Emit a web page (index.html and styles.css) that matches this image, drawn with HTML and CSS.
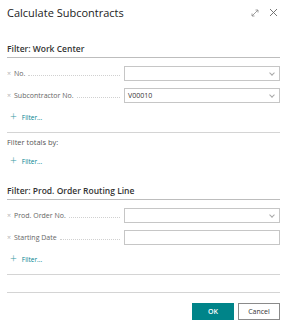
FILE: index.html
```html
<!DOCTYPE html>
<html lang="en">
<head>
    <meta charset="UTF-8">
    <title>Calculate Subcontracts</title>
    <link rel="stylesheet" href="styles.css">
</head>
<body>
    <div class="dialog">
        <div class="header">
            <h1 class="title">Calculate Subcontracts</h1>
            <div class="header-icons">
                <svg width="8" height="8" viewBox="0 0 8 8"><path d="M1 7 L7 1 M4.5 1 H7 V3.5 M1 4.5 V7 H3.5" stroke="#888" stroke-width="0.8" fill="none"/></svg>
                <svg width="9" height="9" viewBox="0 0 9 9"><path d="M1 1 L8 8 M8 1 L1 8" stroke="#666" stroke-width="0.9" fill="none"/></svg>
            </div>
        </div>

        <div class="section">
            <h2 class="section-title">Filter: Work Center</h2>
            <div class="field">
                <span class="remove">×</span><span class="label">No.</span><span class="leader"></span>
                <div class="input select"><span class="value"></span><span class="chevron"></span></div>
            </div>
            <div class="field">
                <span class="remove">×</span><span class="label">Subcontractor No.</span><span class="leader"></span>
                <div class="input select"><span class="value">V00010</span><span class="chevron"></span></div>
            </div>
            <a class="add-filter"><span class="plus">+</span>Filter...</a>
        </div>

        <div class="section plain">
            <div class="sub-title">Filter totals by:</div>
            <a class="add-filter"><span class="plus">+</span>Filter...</a>
        </div>

        <div class="section">
            <h2 class="section-title after-plain">Filter: Prod. Order Routing Line</h2>
            <div class="field">
                <span class="remove">×</span><span class="label">Prod. Order No.</span><span class="leader"></span>
                <div class="input select"><span class="value"></span><span class="chevron"></span></div>
            </div>
            <div class="field">
                <span class="remove">×</span><span class="label">Starting Date</span><span class="leader"></span>
                <div class="input"><span class="value"></span></div>
            </div>
            <a class="add-filter"><span class="plus">+</span>Filter...</a>
        </div>

        <div class="spacer"></div>

        <div class="footer">
            <button class="btn btn-ok">OK</button>
            <button class="btn btn-cancel">Cancel</button>
        </div>
    </div>
</body>
</html>
```

FILE: styles.css
```css
/* base */
body {
    margin: 0;
    background: #ffffff;
    font-family: "Open Sans", "Noto Sans", sans-serif;
    color: #212121;
}

.dialog {
    width: 286px;
    height: 323px;
    padding: 0 6px 0 7px;
    box-sizing: border-box;
    display: flex;
    flex-direction: column;
}

.header {
    display: flex;
    align-items: center;
    justify-content: space-between;
    height: 25px;
}

.title {
    margin: 0;
    font-size: 11px;
    font-weight: 400;
    color: #222;
}

.header-icons {
    display: flex;
    align-items: center;
    gap: 10px;
    padding-right: 2px;
}

/* sections */
.section {
    border-bottom: 1px solid #d4d4d4;
    padding-bottom: 6px;
}

.section-title {
    margin: 18px 0 8px;
    padding-bottom: 3px;
    font-size: 8.5px;
    font-weight: 600;
    color: #333;
    border-bottom: 1px solid #bdbdbd;
}

.section-title.after-plain {
    margin-top: 15px;
}

.section.plain {
    border-bottom: none;
    padding-top: 1px;
    padding-bottom: 0;
}

.sub-title {
    font-size: 7.5px;
    color: #555;
    margin: 3px 0 7px;
}

.field {
    display: flex;
    align-items: center;
    height: 15px;
    margin-bottom: 7px;
}

.remove {
    font-size: 7px;
    color: #b4b4b4;
    width: 5px;
    margin-right: 2px;
}

.label {
    font-size: 7px;
    color: #666;
    white-space: nowrap;
}

.leader {
    flex: 1;
    border-bottom: 1px dotted #d0d0d0;
    margin: 3px 4px 0 3px;
}

.input {
    width: 156px;
    height: 15px;
    box-sizing: border-box;
    border: 1px solid #c6c6c6;
    display: flex;
    align-items: center;
    justify-content: space-between;
    padding: 0 5px 0 3px;
}

.value {
    font-size: 7px;
    color: #333;
}

.chevron {
    width: 3px;
    height: 3px;
    border-right: 1px solid #a8a8a8;
    border-bottom: 1px solid #a8a8a8;
    transform: rotate(45deg);
    margin-top: -2px;
}

.add-filter {
    display: flex;
    align-items: center;
    font-size: 6.5px;
    color: #00838f;
    padding: 2px 0 4px 3px;
}

.plus {
    font-size: 12px;
    font-weight: 300;
    margin-right: 5px;
    line-height: 10px;
    color: #3a9aa2;
}

.spacer {
    height: 17px;
    border-bottom: 1px solid #d4d4d4;
}

/* footer buttons */
.footer {
    display: flex;
    justify-content: flex-end;
    gap: 4px;
    margin-top: 10px;
}

.btn {
    width: 42px;
    height: 17px;
    font-family: inherit;
    font-size: 7px;
    padding: 0;
    cursor: pointer;
}

.btn-ok {
    background: #008489;
    border: 1px solid #008489;
    color: #ffffff;
    font-weight: 600;
}

.btn-cancel {
    background: #ffffff;
    border: 1px solid #8a8a8a;
    color: #333;
}
```
